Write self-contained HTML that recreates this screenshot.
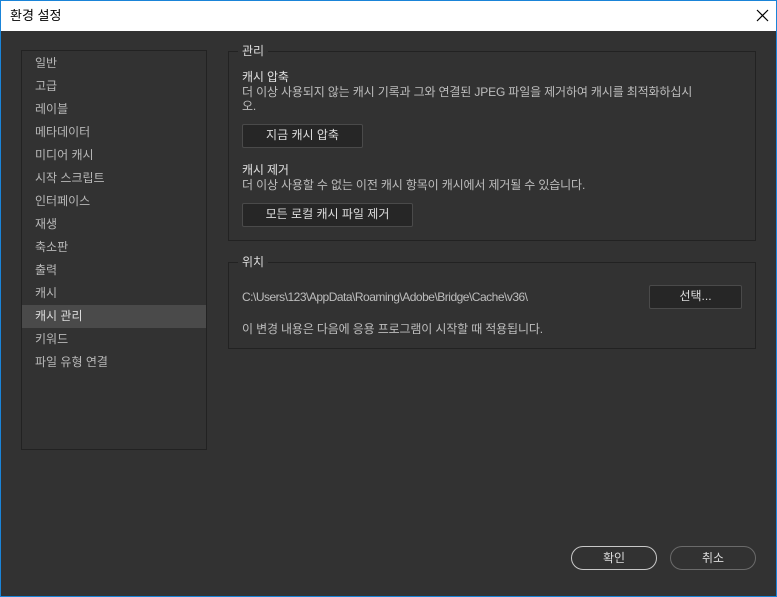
<!DOCTYPE html>
<html><head><meta charset="utf-8"><style>
*{margin:0;padding:0;box-sizing:border-box}
body{width:777px;height:597px;overflow:hidden;background:#1a84d8;font-family:"Liberation Sans","Noto Sans CJK KR",sans-serif;font-size:12px;position:relative}
.win{position:absolute;left:1px;top:1px;width:775px;height:595px;background:#323232}
.title{position:absolute;left:0;top:0;width:775px;height:30px;background:#fff;color:#000;font-size:13px;line-height:30px;padding-left:9px}
.abs{position:absolute}
.list{left:20px;top:49px;width:186px;height:400px;border:1px solid #222}
.item{position:absolute;left:0;width:184px;height:23px;line-height:23px;padding-left:13px;color:#b8b8b8}
.sel{background:#4a4a4a;color:#ddd}
.panel{border:1px solid #222}
.legend{position:absolute;top:-9px;left:9px;background:#323232;padding:0 4px;color:#ddd;line-height:16px}
.t{color:#bdbdbd;position:absolute;white-space:nowrap;letter-spacing:-0.15px}
.h{color:#e0e0e0}
.btn{position:absolute;background:#262626;border:1px solid #4a4a4a;border-radius:2px;color:#ddd;text-align:center;line-height:21px}
.rb{position:absolute;border-radius:12px;height:24px;line-height:22px;text-align:center;color:#ddd}
</style></head><body><div class="win">
<div class="title">환경 설정<svg class="abs" style="left:755px;top:8px" width="13" height="13"><path d="M1 1L12 12M12 1L1 12" stroke="#000" stroke-width="1.2"/></svg></div>
<div class="abs list">
<div class="item" style="top:1px">일반</div>
<div class="item" style="top:24px">고급</div>
<div class="item" style="top:47px">레이블</div>
<div class="item" style="top:70px">메타데이터</div>
<div class="item" style="top:93px">미디어 캐시</div>
<div class="item" style="top:116px">시작 스크립트</div>
<div class="item" style="top:139px">인터페이스</div>
<div class="item" style="top:162px">재생</div>
<div class="item" style="top:185px">축소판</div>
<div class="item" style="top:208px">출력</div>
<div class="item" style="top:231px">캐시</div>
<div class="item sel" style="top:254px">캐시 관리</div>
<div class="item" style="top:277px">키워드</div>
<div class="item" style="top:300px">파일 유형 연결</div>
</div>
<div class="abs panel" style="left:227px;top:50px;width:528px;height:190px"><div class="legend">관리</div></div>
<div class="t h" style="left:241px;top:67px">캐시 압축</div>
<div class="t" style="left:241px;top:82px">더 이상 사용되지 않는 캐시 기록과 그와 연결된 JPEG 파일을 제거하여 캐시를 최적화하십시</div>
<div class="t" style="left:241px;top:96px">오.</div>
<div class="btn" style="left:241px;top:123px;width:121px;height:24px">지금 캐시 압축</div>
<div class="t h" style="left:241px;top:160px">캐시 제거</div>
<div class="t" style="left:241px;top:175px">더 이상 사용할 수 없는 이전 캐시 항목이 캐시에서 제거될 수 있습니다.</div>
<div class="btn" style="left:241px;top:202px;width:171px;height:24px">모든 로컬 캐시 파일 제거</div>
<div class="abs panel" style="left:227px;top:261px;width:528px;height:87px"><div class="legend">위치</div></div>
<div class="t" style="left:241px;top:289px;letter-spacing:-0.5px">C:\Users\123\AppData\Roaming\Adobe\Bridge\Cache\v36\</div>
<div class="btn" style="left:648px;top:284px;width:93px;height:24px">선택...</div>
<div class="t" style="left:241px;top:319px">이 변경 내용은 다음에 응용 프로그램이 시작할 때 적용됩니다.</div>
<div class="rb" style="left:570px;top:545px;width:86px;border:1px solid #c8c8c8">확인</div>
<div class="rb" style="left:669px;top:545px;width:86px;border:1px solid #6a6a6a">취소</div>
</div></body></html>
